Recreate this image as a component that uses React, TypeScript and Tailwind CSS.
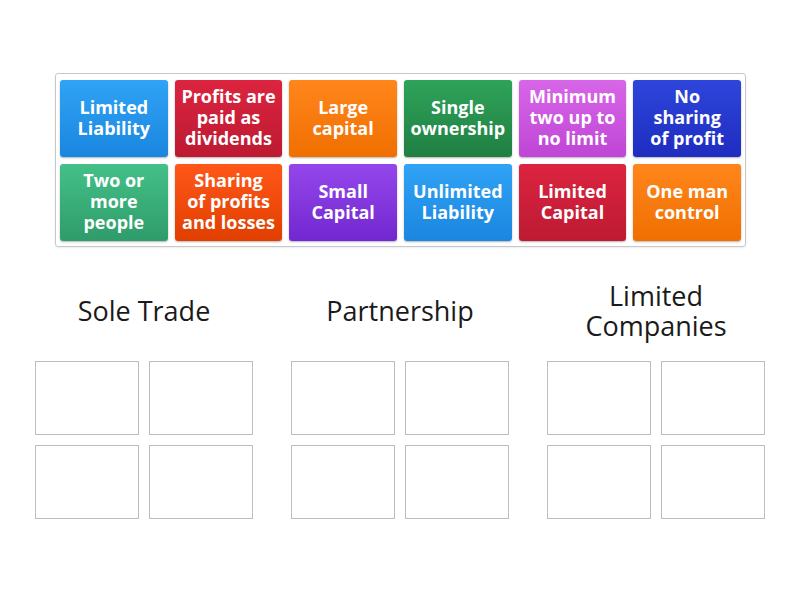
import React from "react";

const tiles: { lines: string[]; cls: string }[] = [
  { lines: ["Limited", "Liability"], cls: "bg-gradient-to-b from-[#2fa3f5] to-[#1b86e0]" },
  { lines: ["Profits are", "paid as", "dividends"], cls: "bg-gradient-to-b from-[#dc2440] to-[#bd1a32]" },
  { lines: ["Large", "capital"], cls: "bg-gradient-to-b from-[#ff861a] to-[#f06f00]" },
  { lines: ["Single", "ownership"], cls: "bg-gradient-to-b from-[#2fa35a] to-[#1f7f42]" },
  { lines: ["Minimum", "two up to", "no limit"], cls: "bg-gradient-to-b from-[#d866e8] to-[#bf45d6]" },
  { lines: ["No", "sharing", "of profit"], cls: "bg-gradient-to-b from-[#2e45db] to-[#1f2cc0]" },
  { lines: ["Two or", "more", "people"], cls: "bg-gradient-to-b from-[#44c088] to-[#2f9c6a]" },
  { lines: ["Sharing", "of profits", "and losses"], cls: "bg-gradient-to-b from-[#ff5718] to-[#e03f00]" },
  { lines: ["Small", "Capital"], cls: "bg-gradient-to-b from-[#9446ea] to-[#7226d0]" },
  { lines: ["Unlimited", "Liability"], cls: "bg-gradient-to-b from-[#2fa3f5] to-[#1b86e0]" },
  { lines: ["Limited", "Capital"], cls: "bg-gradient-to-b from-[#dc2440] to-[#bd1a32]" },
  { lines: ["One man", "control"], cls: "bg-gradient-to-b from-[#ff861a] to-[#f06f00]" },
];

const groups = [
  { title: "Sole Trade" },
  { title: "Partnership" },
  { title: "Limited Companies" },
];

export default function App() {
  return (
    <div
      className="w-[800px] h-[600px] bg-white overflow-hidden"
      style={{ fontFamily: '"Open Sans", "Noto Sans", sans-serif' }}
    >
      <div className="pt-[73px] pl-[55px]">
        <div className="w-[691px] h-[174px] border border-[#c8c8c8] rounded-[3px] px-[4px] pt-[6px] shadow-[0_1px_2px_rgba(0,0,0,0.08)]">
          <div className="grid grid-cols-6 gap-[7px]">
            {tiles.map((t, i) => (
              <div
                key={i}
                className={`${t.cls} h-[77px] rounded-[3px] flex flex-col items-center justify-center text-center text-white font-bold text-[18px] leading-[21px] whitespace-nowrap pb-[2px] shadow-[0_1px_2px_rgba(0,0,0,0.3)]`}
              >
                {t.lines.map((l, j) => (
                  <span key={j}>{l}</span>
                ))}
              </div>
            ))}
          </div>
        </div>
      </div>
      <div className="flex gap-[38px] pl-[35px] pt-[34px]">
        {groups.map((g, i) => (
          <div key={i} className="w-[218px]">
            <div className="h-[60px] flex items-center justify-center text-center text-[27px] leading-[30px] text-[#1a1a1a] px-[20px]">
              {g.title}
            </div>
            <div className="grid grid-cols-2 gap-x-[10px] gap-y-[10px] mt-[20px]">
              {[0, 1, 2, 3].map((k) => (
                <div key={k} className="h-[74px] border border-[#bdbdbd]" />
              ))}
            </div>
          </div>
        ))}
      </div>
    </div>
  );
}
